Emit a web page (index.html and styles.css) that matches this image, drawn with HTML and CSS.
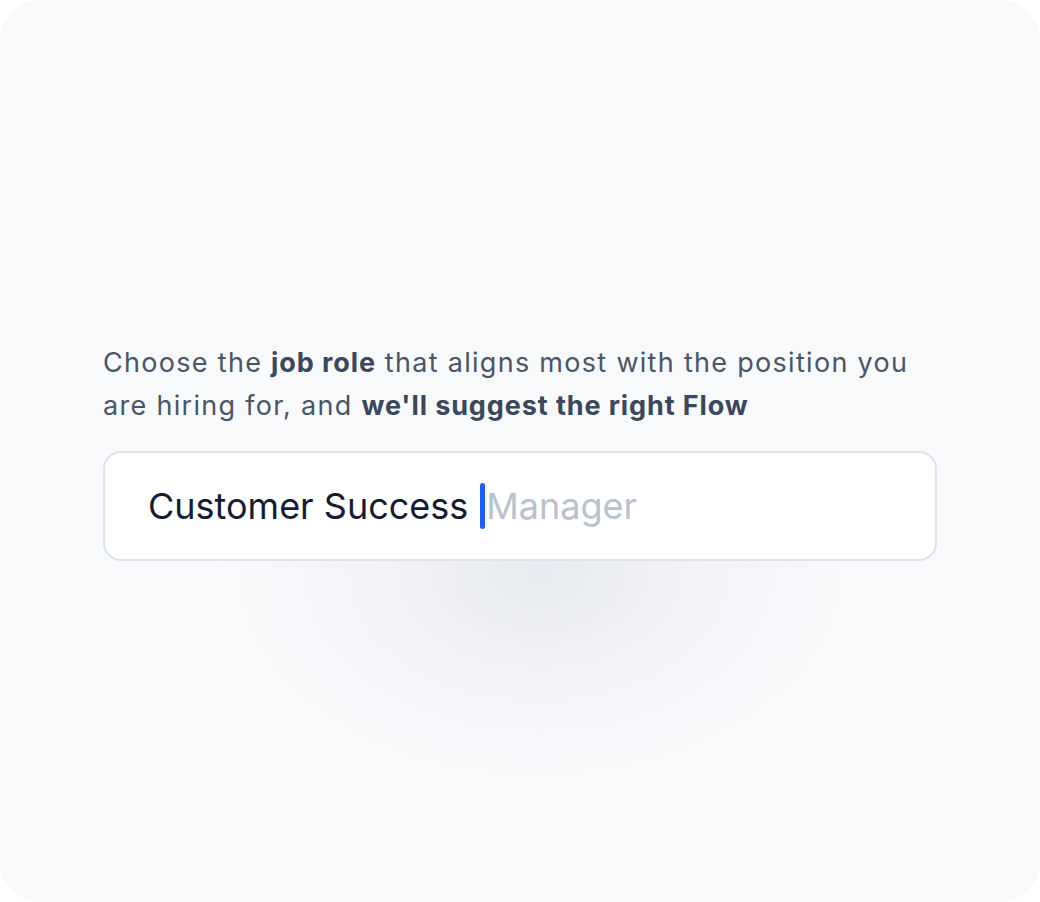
FILE: index.html
```html
<!DOCTYPE html>
<html lang="en">
<head>
    <meta charset="UTF-8">
    <meta name="viewport" content="width=device-width, initial-scale=1.0">
    <title>Choose a job role</title>
    <link rel="stylesheet" href="styles.css">
</head>
<body>
    <div class="card">
        <div class="picker">
            <p class="hint">Choose the <b>job role</b> that aligns most with the position you are hiring for, and <b>we'll suggest the right Flow</b></p>
            <div class="field">
                <span class="typed">Customer Success</span>
                <span class="caret"></span>
                <span class="suggest">Manager</span>
            </div>
        </div>
    </div>
</body>
</html>
```
FILE: styles.css
```css
body {
    margin: 0;
    background: #ffffff;
    font-family: Inter, "Noto Sans", sans-serif;
}
.card {
    height: 902px;
    border-radius: 40px;
    background-color: #f8f9fb;
    display: flex;
    align-items: center;
    padding: 0 103px;
    overflow: hidden;
}
.picker {
    width: 100%;
    position: relative;
    z-index: 0;
}
.hint {
    margin: 0 0 24px 0;
    font-size: 27px;
    line-height: 43px;
    letter-spacing: 1.3px;
    color: #4a5567;
    max-width: 834px;
}
.hint b {
    font-weight: 700;
    color: #3b475a;
    letter-spacing: 0.9px;
}
.field {
    position: relative;
    display: flex;
    align-items: center;
    height: 106px;
    padding: 0 43px;
    border: 2px solid #dfe2e9;
    border-radius: 18px;
    background: #ffffff;
    font-size: 36px;
}
/* soft shadow pooled under the input */
.field::before {
    content: "";
    position: absolute;
    left: -60px;
    right: -60px;
    top: 0;
    height: 420px;
    background: radial-gradient(ellipse 320px 215px at 52% 120px, rgba(206, 211, 219, 0.42), rgba(222, 226, 232, 0.24) 50%, rgba(248, 249, 251, 0) 100%);
    z-index: -1;
}
.typed {
    color: #161b33;
}
.caret {
    width: 5px;
    height: 46px;
    border-radius: 3px;
    background: #1d5cff;
    margin-left: 12px;
}
.suggest {
    color: #b9c1cd;
    margin-left: 1px;
}
```
